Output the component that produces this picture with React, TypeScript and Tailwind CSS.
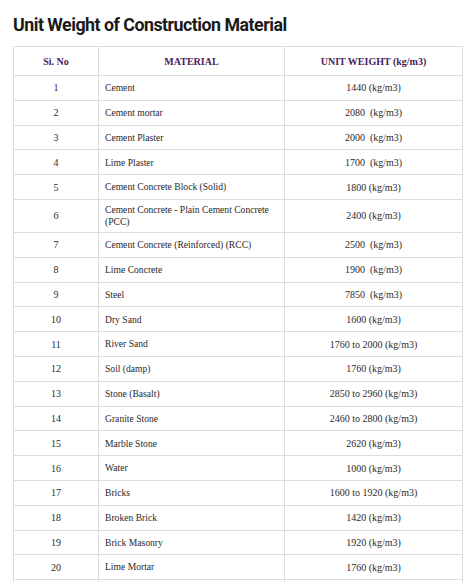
const rows: [string, string, string][] = [
  ["1", "Cement", "1440 (kg/m3)"],
  ["2", "Cement mortar", "2080  (kg/m3)"],
  ["3", "Cement Plaster", "2000  (kg/m3)"],
  ["4", "Lime Plaster", "1700  (kg/m3)"],
  ["5", "Cement Concrete Block (Solid)", "1800 (kg/m3)"],
  ["6", "Cement Concrete - Plain Cement Concrete (PCC)", "2400 (kg/m3)"],
  ["7", "Cement Concrete (Reinforced) (RCC)", "2500  (kg/m3)"],
  ["8", "Lime Concrete", "1900  (kg/m3)"],
  ["9", "Steel", "7850  (kg/m3)"],
  ["10", "Dry Sand", "1600 (kg/m3)"],
  ["11", "River Sand", "1760 to 2000 (kg/m3)"],
  ["12", "Soil (damp)", "1760 (kg/m3)"],
  ["13", "Stone (Basalt)", "2850 to 2960 (kg/m3)"],
  ["14", "Granite Stone", "2460 to 2800 (kg/m3)"],
  ["15", "Marble Stone", "2620 (kg/m3)"],
  ["16", "Water", "1000 (kg/m3)"],
  ["17", "Bricks", "1600 to 1920 (kg/m3)"],
  ["18", "Broken Brick", "1420 (kg/m3)"],
  ["19", "Brick Masonry", "1920 (kg/m3)"],
  ["20", "Lime Mortar", "1760 (kg/m3)"],
  ["", "", ""],
];

const App = () => {
  return (
    <div className="w-[474px] h-[582px] overflow-hidden bg-white">
      <h1 className="pl-[13px] pt-[14px] h-[46px] text-[17.8px] leading-[22px] tracking-[-0.5px] font-bold text-[#1a1a1a] font-['Roboto',sans-serif]">
        Unit Weight of Construction Material
      </h1>
      <table className="ml-[13px] w-[449px] border-collapse table-fixed font-['Liberation_Serif',serif] text-[10px] text-[#2a2a2a]">
        <colgroup>
          <col className="w-[85px]" />
          <col className="w-[186px]" />
          <col className="w-[178px]" />
        </colgroup>
        <thead>
          <tr className="h-[29px]">
            <th className="border border-[#dcdcdc] text-center font-bold text-[#4a1c5a]">Si. No</th>
            <th className="border border-[#dcdcdc] text-center font-bold text-[#4a1c5a]">MATERIAL</th>
            <th className="border border-[#dcdcdc] text-center font-bold text-[#4a1c5a]">UNIT WEIGHT (kg/m3)</th>
          </tr>
        </thead>
        <tbody>
          {rows.map(([no, material, weight], i) => (
            <tr key={i} className={no === "6" ? "h-[33px]" : "h-[24.8px]"}>
              <td className="border border-[#dcdcdc] text-center">{no}</td>
              <td className="border border-[#dcdcdc] pl-[6px] pr-1 text-[9.6px] leading-[11.5px]">{material}</td>
              <td className="border border-[#dcdcdc] text-center whitespace-pre">{weight}</td>
            </tr>
          ))}
        </tbody>
      </table>
    </div>
  );
};

export default App;
